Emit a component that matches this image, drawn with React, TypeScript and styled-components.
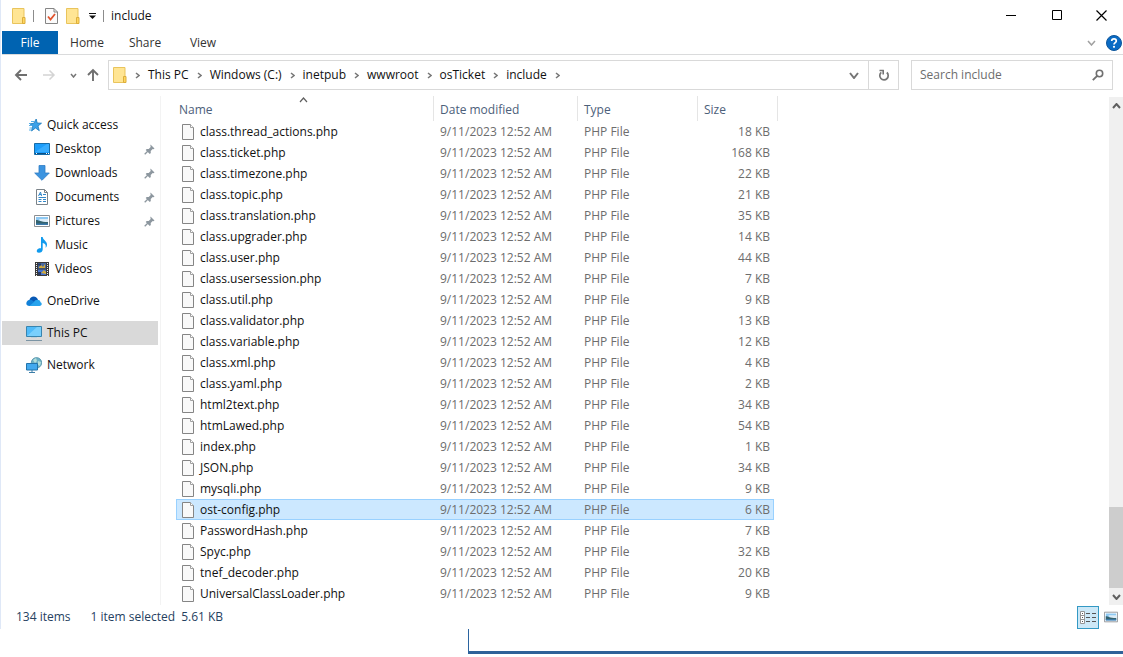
import React from "react";
import styled, { createGlobalStyle, css } from "styled-components";

const GlobalStyle = createGlobalStyle`
  *, *::before, *::after { box-sizing: border-box; }
  body {
    margin: 0;
    background: #fff;
    color: #111;
    font-family: "Open Sans", "Noto Sans", sans-serif;
    font-size: 12px;
    line-height: 16px;
  }
  button, input { font: inherit; color: inherit; border: 0; padding: 0; background: none; }
  a { color: inherit; text-decoration: none; }
  svg { display: block; flex: none; }
`;

const Explorer = styled.div`
  border-left: 1px solid #dfe8f7;
  padding-left: 1px;
`;

const TitleBar = styled.header`
  display: flex;
  align-items: center;
  height: 31px;
  padding-left: 10px;
`;

const QuickTools = styled.div`
  display: flex;
  align-items: center;
  flex: 1;
`;

const ToolButton = styled.button<{ $width?: number }>`
  display: flex;
  align-items: center;
  justify-content: center;
  width: ${(p) => p.$width ?? 14}px;
  height: 20px;
`;

const Divider = styled.span<{ $before: number; $after: number }>`
  width: 1px;
  height: 12px;
  background: #8c8c8c;
  margin: 0 ${(p) => p.$after}px 0 ${(p) => p.$before}px;
`;

const WindowTitle = styled.h1`
  margin: 0;
  font-size: 12px;
  font-weight: 400;
`;

const CaptionButton = styled.button`
  display: flex;
  align-items: center;
  justify-content: center;
  width: 46px;
  height: 30px;
  &:last-child { width: 43px; }
`;

const Ribbon = styled.nav`
  display: flex;
  height: 24px;
  border-bottom: 1px solid #dadbdc;
`;

const Tab = styled.button<{ $active?: boolean }>`
  width: ${(p) => (p.$active ? 56 : 58)}px;
  background: ${(p) => (p.$active ? "#0063b1" : "transparent")};
  color: ${(p) => (p.$active ? "#fff" : "#333")};
`;

const RibbonTools = styled.div`
  display: flex;
  align-items: center;
  gap: 10px;
  margin-left: auto;
  padding-right: 1px;
`;

const AddressRow = styled.div`
  display: flex;
  align-items: center;
  height: 41px;
  padding: 0 10px 1px 12px;
`;

const NavButtons = styled.div`
  display: flex;
  align-items: center;
  width: 94px;
`;

const AddressBox = styled.div`
  display: flex;
  align-items: center;
  flex: 1;
  height: 30px;
  border: 1px solid #d9d9d9;
  padding-left: 4px;
  margin-right: 12px;
`;

const Crumbs = styled.ol`
  display: flex;
  align-items: center;
  flex: 1;
  list-style: none;
  margin: 0;
  padding: 0;
`;

const Crumb = styled.li`
  display: flex;
  align-items: center;
`;

const CrumbChevron = styled.span`
  display: flex;
  justify-content: center;
  width: 21px;
`;

const RefreshButton = styled.button`
  display: flex;
  align-items: center;
  justify-content: center;
  width: 30px;
  height: 28px;
  border-left: 1px solid #d9d9d9;
`;

const SearchBox = styled.label`
  display: flex;
  align-items: center;
  width: 202px;
  height: 30px;
  border: 1px solid #d9d9d9;
  padding: 0 8px;
`;

const SearchInput = styled.input`
  flex: 1;
  min-width: 0;
  outline: 0;
  &::placeholder { color: #6d6d6d; opacity: 1; }
`;

const Body = styled.div`
  display: flex;
`;

const SidePane = styled.nav`
  display: flex;
  flex-direction: column;
  gap: 8px;
  width: 159px;
  padding: 17px 2px 0 0;
  border-right: 1px solid #f3f3f3;
`;

const PlaceLink = styled.a<{ $nested?: boolean; $selected?: boolean }>`
  display: grid;
  grid-template-columns: 16px 1fr 12px;
  align-items: center;
  column-gap: 5px;
  height: 24px;
  padding: 0 2px 0 ${(p) => (p.$nested ? 32 : 24)}px;
  background: ${(p) => (p.$selected ? "#d9d9d9" : "transparent")};
`;

const PlaceGroup = styled.div`
  display: flex;
  flex-direction: column;
`;

const FileArea = styled.main`
  flex: 1;
  padding: 0 0 1px 15px;
`;

const FileTable = styled.table`
  width: 602px;
  table-layout: fixed;
  border-collapse: separate;
  border-spacing: 0;
`;

const HeadCell = styled.th`
  position: relative;
  height: 25px;
  padding: 3px 0 0 6px;
  text-align: left;
  font-weight: 400;
  color: #4c607a;
  border-right: 1px solid #e5e5e5;
  &:first-child { padding-left: 3px; }
`;

const SortMark = styled.span`
  position: absolute;
  top: 1px;
  left: calc(50% - 6px);
`;

const FileRow = styled.tr<{ $selected?: boolean }>`
  color: #6d6d6d;
  td { height: 21px; padding: 0 0 0 6px; }
  td:first-child { padding-left: 6px; color: #111; }
  ${(p) =>
    p.$selected &&
    css`
      td:not(:last-child) {
        background: #cce8ff;
        box-shadow: inset 0 1px #99d1ff, inset 0 -1px #99d1ff;
      }
      td:first-child { box-shadow: inset 0 1px #99d1ff, inset 0 -1px #99d1ff, inset 1px 0 #99d1ff; }
      td:nth-child(4) { box-shadow: inset 0 1px #99d1ff, inset 0 -1px #99d1ff, inset -1px 0 #99d1ff; }
    `}
  td:nth-child(4) { text-align: right; padding-right: 4px; }
  td:last-child { padding: 0; }
`;

const FileName = styled.span`
  display: flex;
  align-items: center;
  gap: 5px;
`;

const ScrollBar = styled.div`
  display: flex;
  flex-direction: column;
  width: 14px;
  margin-top: 1px;
  background: #f0f0f0;
`;

const ScrollButton = styled.button`
  display: flex;
  align-items: center;
  justify-content: center;
  height: 17px;
`;

const ScrollThumb = styled.div`
  height: 81px;
  margin-top: auto;
  background: #cdcdcd;
`;

const StatusBar = styled.footer`
  display: flex;
  align-items: center;
  gap: 20px;
  height: 24px;
  padding-left: 14px;
  color: #26415f;
`;

const StatusPair = styled.span`
  display: flex;
  gap: 6px;
`;

const ViewModes = styled.div`
  display: flex;
  margin-left: auto;
`;

const ViewButton = styled.button<{ $active?: boolean }>`
  display: flex;
  align-items: center;
  justify-content: center;
  width: ${(p) => (p.$active ? 22 : 24)}px;
  height: 23px;
  border: ${(p) => (p.$active ? "1px solid #3399c4" : "0")};
  background: ${(p) => (p.$active ? "#cce8f7" : "none")};
`;

const WindowBehind = styled.div`
  height: 25px;
  margin-left: 468px;
  border-left: 1px solid #2b64a0;
  border-bottom: 3px solid #2f6299;
`;

const FolderIcon = () => (
  <svg width="14" height="16" viewBox="0 0 14 16">
    <path d="M.5.5h11.500v15H.5z" fill="#ffe48f" stroke="#e9c45c" />
    <path d="M1 1h10v14H1z" fill="#ffe594" />
    <path d="M10.500 9.500h2.500v6h-2.500z" fill="#ffd65f" stroke="#dcae3c" />
  </svg>
);

const CheckedPageIcon = () => (
  <svg width="13" height="16" viewBox="0 0 13 16">
    <path d="M.5.5h8.500l3.500 3.500v11.500H.5z" fill="#fbfbfb" stroke="#858585" />
    <path d="M9 .5V4h3.500" fill="none" stroke="#858585" />
    <path d="M3 8.500l2.500 3L10 6" fill="none" stroke="#e0532d" strokeWidth="1.800" />
  </svg>
);

const CustomizeIcon = () => (
  <svg width="7" height="6" viewBox="0 0 7 6">
    <path d="M0 .5h7" stroke="#111" />
    <path d="M0 2.500h7L3.500 6z" fill="#111" />
  </svg>
);

type ChevronProps = { dir: "up" | "down" | "right"; w: number; h: number; color?: string; stroke?: number };
const Chevron = ({ dir, w, h, color = "#5f5f5f", stroke = 1.5 }: ChevronProps) => {
  const d = {
    up: `M1 ${h - 1}L${w / 2} 1L${w - 1} ${h - 1}`,
    down: `M1 1L${w / 2} ${h - 1}L${w - 1} 1`,
    right: `M1 1L${w - 1} ${h / 2}L1 ${h - 1}`,
  }[dir];
  return (
    <svg width={w} height={h} viewBox={`0 0 ${w} ${h}`}>
      <path d={d} fill="none" stroke={color} strokeWidth={stroke} />
    </svg>
  );
};

const ArrowIcon = ({ dir, color }: { dir: "left" | "right" | "up"; color: string }) => (
  <svg width="14" height="14" viewBox="0 0 14 14">
    <path
      d={
        dir === "left"
          ? "M13 7H2M7 2L2 7l5 5"
          : dir === "right"
            ? "M1 7h11M7.500 2.500L12 7l-4.500 4.500"
            : "M7 13V2M2 7l5-5 5 5"
      }
      fill="none"
      stroke={color}
      strokeWidth={dir === "right" ? 1.5 : 1.9}
    />
  </svg>
);

const RefreshIcon = () => (
  <svg width="12" height="13" viewBox="0 0 12 13">
    <path d="M3.300 3.400A4.200 4.200 0 1 0 8.800 3.500" fill="none" stroke="#757575" strokeWidth="1.700" />
    <path d="M1.500 1.500h4.300M5.200 1v4.500" fill="none" stroke="#757575" strokeWidth="1.600" />
  </svg>
);

const SearchIcon = () => (
  <svg width="12" height="12" viewBox="0 0 12 12">
    <circle cx="7.500" cy="4.500" r="3.200" fill="none" stroke="#707070" strokeWidth="1.600" />
    <path d="M5.200 6.800L.8 11.200" stroke="#707070" strokeWidth="1.900" />
  </svg>
);

const HelpIcon = () => (
  <svg width="16" height="16" viewBox="0 0 16 16">
    <circle cx="8" cy="8" r="7.500" fill="#0a6bc4" stroke="#0d559b" />
    <path d="M5.700 6C5.700 3.200 10.300 3.200 10.300 6 10.300 7.600 8 7.600 8 9.500" fill="none" stroke="#fff" strokeWidth="1.700" />
    <circle cx="8" cy="11.800" r="1.100" fill="#fff" />
  </svg>
);

const PinIcon = () => (
  <svg width="11" height="11" viewBox="0 0 11 11">
    <path d="M6.500.5l4 4-1 .8-.8-.2-2 2 .1 2-1 .9L1.700 5.900l1-1 2 .1 2-2-.3-1.300z" fill="#8d979f" />
    <path d="M4 7L.7 10.300" stroke="#8d979f" strokeWidth="1.300" />
  </svg>
);

const StarIcon = () => (
  <svg width="16" height="16" viewBox="0 0 16 16">
    <path d="M10.200 2l1 4 4.300.2-3.500 2.800 1.300 4.700L9.500 11l-4 3 1.200-4.700-2.700-2.500 3.800-.5z" fill="#3aa0e8" stroke="#1979bd" strokeWidth=".8" />
    <path d="M5 4.500h3M3 6.500h2M3 8.500h3M3.500 11h2.500M3 13h2.500" stroke="#54aee8" />
  </svg>
);

const DesktopIcon = () => (
  <svg width="16" height="16" viewBox="0 0 16 16">
    <path d="M.5 2.500h15v11H.5z" fill="#1c9dfb" stroke="#176ca8" />
    <path d="M1 11L13 3h2v8z" fill="#38adff" />
    <path d="M1 12.500h14" stroke="#0c4f82" />
    <path d="M2 12.500h1M12 12.500h1M14 12.500h1" stroke="#fff" />
  </svg>
);

const DownloadIcon = () => (
  <svg width="16" height="16" viewBox="0 0 16 16">
    <path d="M5 .5h6V8h4.300L8 15.300.7 8H5z" fill="#3c94e0" stroke="#2e7cc4" strokeWidth=".8" />
  </svg>
);

const DocumentIcon = () => (
  <svg width="16" height="16" viewBox="0 0 16 16">
    <path d="M2.500.5h8l3 3v12h-11z" fill="#fff" stroke="#7b8389" />
    <path d="M10.500.5v3h3" fill="none" stroke="#7b8389" />
    <path d="M4.500 7L6.500 3l1 4M5 5.500h2.500M9 5.500h3M4.500 8.500h7.500M4.500 10.500h3M9 10.500h3M4.500 12.500h3M9 12.500h3" fill="none" stroke="#3287c9" />
  </svg>
);

const PictureIcon = ({ size = 16 }: { size?: number }) => (
  <svg width={size} height={size} viewBox="0 0 16 16">
    <path d="M.5 2.500h15v11H.5z" fill="#fff" stroke="#8b8f93" />
    <path d="M2 4h12v8H2z" fill="#8ec9f3" />
    <path d="M5 6h9v3H7z" fill="#dcecf7" />
    <path d="M2 7c3 0 4 2 12 2v2H2z" fill="#35636e" />
    <path d="M2 10.500h12V12H2z" fill="#3a79ab" />
  </svg>
);

const MusicIcon = () => (
  <svg width="16" height="16" viewBox="0 0 16 16">
    <path d="M7 0h1.700c.2 3 4.300 4 4.300 7.500 0 1.500-.6 2.500-1.400 3.300.7-3.300-.6-4.300-2.900-4.900v6.600C8.700 14.500 7 15.800 5 15.800S2.300 14.500 3 13s2.500-2 4-1.700z" fill="#119bee" />
  </svg>
);

const VideoIcon = () => (
  <svg width="16" height="16" viewBox="0 0 16 16">
    <path d="M1 1h14v14H1z" fill="#3a3a3a" />
    <path d="M2.500 2v13M13.500 2v13" stroke="#f3f3f3" strokeDasharray="1 1" />
    <path d="M4 2h8v5.500H4z" fill="#49699f" />
    <path d="M4 8.500h8V14H4z" fill="#4572cf" />
    <path d="M5 6l2-2 2 2 2-3v4H5zM7 12l3-3 2 2v2z" fill="#d0a93d" />
    <path d="M4 2.500h3v2H4zM4 11h3v3H4z" fill="#283b63" />
  </svg>
);

const CloudIcon = () => (
  <svg width="16" height="16" viewBox="0 0 16 16">
    <path d="M3.500 7C4 3.500 9.500 1.500 12 6.500L8 11z" fill="#0758b5" />
    <path d="M.3 10.500C.3 7.500 3.500 6 6 7.200l6 4.300L3.500 13C1.500 13 .3 12 .3 10.500z" fill="#1180d8" />
    <path d="M8 9c1-3 6-3 6.500.2 2 1 1.500 3.800-1 3.800H3.500z" fill="#27a3ed" />
  </svg>
);

const ComputerIcon = () => (
  <svg width="16" height="16" viewBox="0 0 16 16">
    <path d="M.5 1.500h15v10H.5z" fill="#50bbf9" stroke="#3884ae" />
    <path d="M1 11L11 2h4v9z" fill="#79cffc" />
    <path d="M0 15.500h16" stroke="#7b94a4" />
    <path d="M5 12.500h6" stroke="#bed0da" />
  </svg>
);

const NetworkIcon = () => (
  <svg width="16" height="16" viewBox="0 0 16 16">
    <circle cx="10.500" cy="5.800" r="5.200" fill="#6eb2c6" stroke="#4b8ba5" strokeWidth=".8" />
    <path d="M7 3l3-2 1 3-2 2zM12 4l3 1-1 4-2-1z" fill="#b5deda" />
    <path d="M.5 6.500h11v6.500H.5z" fill="#43a9ee" stroke="#2374ac" />
    <path d="M6 13v2M3 15.500h6" stroke="#3b7da7" />
  </svg>
);

const FileIcon = () => (
  <svg width="13" height="16" viewBox="0 0 13 16">
    <path d="M.5.5h8l3 3v12H.5z" fill="#f9f9f9" stroke="#858585" />
    <path d="M8.500.5v3h3" fill="#fff" stroke="#a0a0a0" />
  </svg>
);

const DetailsIcon = () => (
  <svg width="16" height="13" viewBox="0 0 16 13">
    <path d="M.5.5h4v12h-4zM.5 4.500h4M.5 8.500h4" fill="#fff" stroke="#949494" />
    <path d="M2 2.500h1M2 6.500h1M2 10.500h1M6 2.500h4M12 2.500h4M6 6.500h4M12 6.500h4M6 10.500h4M12 10.500h4" stroke="#555" />
  </svg>
);

const crumbs = ["This PC", "Windows (C:)", "inetpub", "wwwroot", "osTicket", "include"];

const pinned = [
  { name: "Desktop", icon: <DesktopIcon />, pin: true },
  { name: "Downloads", icon: <DownloadIcon />, pin: true },
  { name: "Documents", icon: <DocumentIcon />, pin: true },
  { name: "Pictures", icon: <PictureIcon />, pin: true },
  { name: "Music", icon: <MusicIcon />, pin: false },
  { name: "Videos", icon: <VideoIcon />, pin: false },
];

const roots = [
  { name: "OneDrive", icon: <CloudIcon /> },
  { name: "This PC", icon: <ComputerIcon />, selected: true },
  { name: "Network", icon: <NetworkIcon /> },
];

const files: [string, number][] = [
  ["class.thread_actions.php", 18],
  ["class.ticket.php", 168],
  ["class.timezone.php", 22],
  ["class.topic.php", 21],
  ["class.translation.php", 35],
  ["class.upgrader.php", 14],
  ["class.user.php", 44],
  ["class.usersession.php", 7],
  ["class.util.php", 9],
  ["class.validator.php", 13],
  ["class.variable.php", 12],
  ["class.xml.php", 4],
  ["class.yaml.php", 2],
  ["html2text.php", 34],
  ["htmLawed.php", 54],
  ["index.php", 1],
  ["JSON.php", 34],
  ["mysqli.php", 9],
  ["ost-config.php", 6],
  ["PasswordHash.php", 7],
  ["Spyc.php", 32],
  ["tnef_decoder.php", 20],
  ["UniversalClassLoader.php", 9],
];

export default function App() {
  return (
    <>
      <GlobalStyle />
      <Explorer>
        <TitleBar>
          <QuickTools>
            <FolderIcon />
            <Divider $before={7} $after={10} />
            <ToolButton aria-label="Properties"><CheckedPageIcon /></ToolButton>
            <ToolButton aria-label="New folder" $width={30}><FolderIcon /></ToolButton>
            <ToolButton aria-label="Customize toolbar" $width={8}><CustomizeIcon /></ToolButton>
            <Divider $before={7} $after={7} />
            <WindowTitle>include</WindowTitle>
          </QuickTools>
          <CaptionButton aria-label="Minimize">
            <svg width="11" height="11" viewBox="0 0 11 11"><path d="M0 5.500h10" stroke="#000" /></svg>
          </CaptionButton>
          <CaptionButton aria-label="Maximize">
            <svg width="11" height="11" viewBox="0 0 11 11"><path d="M.5.5h9v9h-9z" fill="none" stroke="#000" /></svg>
          </CaptionButton>
          <CaptionButton aria-label="Close">
            <svg width="11" height="11" viewBox="0 0 11 11"><path d="M.5.5l10 10M10.500.5l-10 10" stroke="#000" strokeWidth="1.200" /></svg>
          </CaptionButton>
        </TitleBar>

        <Ribbon>
          <Tab $active>File</Tab>
          <Tab>Home</Tab>
          <Tab>Share</Tab>
          <Tab>View</Tab>
          <RibbonTools>
            <button aria-label="Expand ribbon"><Chevron dir="down" w={9} h={6} color="#a0a0a0" /></button>
            <button aria-label="Help"><HelpIcon /></button>
          </RibbonTools>
        </Ribbon>

        <AddressRow>
          <NavButtons>
            <ToolButton aria-label="Back"><ArrowIcon dir="left" color="#6f6f6f" /></ToolButton>
            <ToolButton aria-label="Forward" $width={46}><ArrowIcon dir="right" color="#d4d4d4" /></ToolButton>
            <ToolButton aria-label="Recent locations" $width={8}><Chevron dir="down" w={7} h={5} color="#777" /></ToolButton>
            <ToolButton aria-label="Up" $width={34}><ArrowIcon dir="up" color="#6f6f6f" /></ToolButton>
          </NavButtons>
          <AddressBox>
            <FolderIcon />
            <Crumbs>
              <Crumb><CrumbChevron><Chevron dir="right" w={5} h={7} color="#777" /></CrumbChevron></Crumb>
              {crumbs.map((c) => (
                <Crumb key={c}>
                  <a href="#path">{c}</a>
                  <CrumbChevron><Chevron dir="right" w={5} h={7} color="#777" /></CrumbChevron>
                </Crumb>
              ))}
            </Crumbs>
            <ToolButton aria-label="Previous locations" $width={28}><Chevron dir="down" w={10} h={7} color="#757575" stroke={2} /></ToolButton>
            <RefreshButton aria-label="Refresh"><RefreshIcon /></RefreshButton>
          </AddressBox>
          <SearchBox>
            <SearchInput type="text" placeholder="Search include" aria-label="Search include" />
            <SearchIcon />
          </SearchBox>
        </AddressRow>

        <Body>
          <SidePane>
            <PlaceGroup>
              <PlaceLink href="#quick"><StarIcon />Quick access</PlaceLink>
              {pinned.map((p) => (
                <PlaceLink key={p.name} href="#place" $nested>
                  {p.icon}
                  <span>{p.name}</span>
                  {p.pin && <PinIcon />}
                </PlaceLink>
              ))}
            </PlaceGroup>
            {roots.map((r) => (
              <PlaceLink key={r.name} href="#place" $selected={r.selected}>
                {r.icon}
                <span>{r.name}</span>
              </PlaceLink>
            ))}
          </SidePane>

          <FileArea>
            <FileTable>
              <colgroup>
                <col width="258" />
                <col width="144" />
                <col width="120" />
                <col width="76" />
                <col width="4" />
              </colgroup>
              <thead>
                <tr>
                  <HeadCell>
                    Name
                    <SortMark><Chevron dir="up" w={9} h={6} stroke={1.2} /></SortMark>
                  </HeadCell>
                  <HeadCell>Date modified</HeadCell>
                  <HeadCell>Type</HeadCell>
                  <HeadCell colSpan={2}>Size</HeadCell>
                </tr>
              </thead>
              <tbody>
                {files.map(([name, kb]) => (
                  <FileRow key={name} $selected={name === "ost-config.php"}>
                    <td><FileName><FileIcon />{name}</FileName></td>
                    <td>9/11/2023 12:52 AM</td>
                    <td>PHP File</td>
                    <td>{kb} KB</td>
                    <td />
                  </FileRow>
                ))}
              </tbody>
            </FileTable>
          </FileArea>

          <ScrollBar>
            <ScrollButton aria-label="Scroll up"><Chevron dir="up" w={9} h={6} stroke={2} /></ScrollButton>
            <ScrollThumb />
            <ScrollButton aria-label="Scroll down"><Chevron dir="down" w={9} h={6} stroke={2} /></ScrollButton>
          </ScrollBar>
        </Body>

        <StatusBar>
          <span>134 items</span>
          <StatusPair><span>1 item selected</span><span>5.61 KB</span></StatusPair>
          <ViewModes>
            <ViewButton $active aria-label="Details view"><DetailsIcon /></ViewButton>
            <ViewButton aria-label="Thumbnail view"><PictureIcon size={14} /></ViewButton>
          </ViewModes>
        </StatusBar>
      </Explorer>
      <WindowBehind />
    </>
  );
}
